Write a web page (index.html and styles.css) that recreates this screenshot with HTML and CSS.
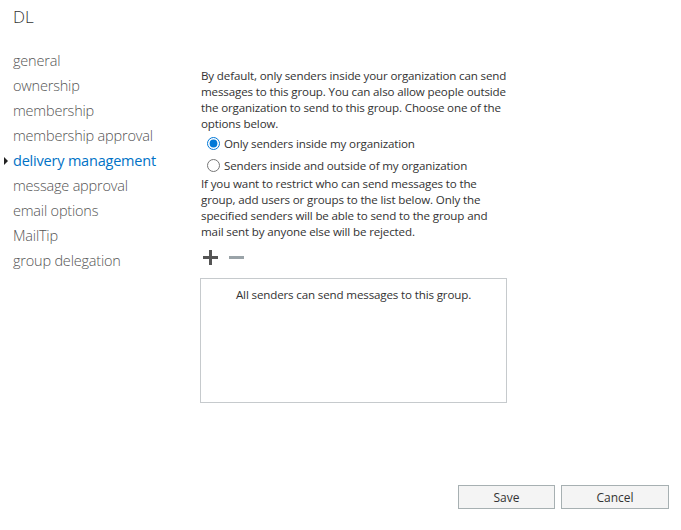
FILE: index.html
```html
<!DOCTYPE html>
<html lang="en">
<head>
  <meta charset="UTF-8" />
  <title>DL - delivery management</title>
  <link rel="stylesheet" href="styles.css">
</head>
<body>
  <div class="page">
    <h1 class="title">DL</h1>

    <div class="main">
      <ul class="nav">
        <li>general</li>
        <li>ownership</li>
        <li>membership</li>
        <li>membership approval</li>
        <li class="active">delivery management</li>
        <li>message approval</li>
        <li>email options</li>
        <li>MailTip</li>
        <li>group delegation</li>
      </ul>

      <div class="content">
        <p class="text">By default, only senders inside your organization can send messages to this group. You can also allow people outside the organization to send to this group. Choose one of the options below.</p>

        <label class="radio">
          <input type="radio" name="senders" checked>
          <span>Only senders inside my organization</span>
        </label>
        <label class="radio">
          <input type="radio" name="senders">
          <span>Senders inside and outside of my organization</span>
        </label>

        <p class="text">If you want to restrict who can send messages to the group, add users or groups to the list below. Only the specified senders will be able to send to the group and mail sent by anyone else will be rejected.</p>

        <div class="toolbar">
          <svg class="icon" width="15" height="15" viewBox="0 0 15 15">
            <rect x="6" y="0" width="3" height="15" fill="#555"/>
            <rect x="0" y="6" width="15" height="3" fill="#555"/>
          </svg>
          <svg class="icon" width="15" height="15" viewBox="0 0 15 15">
            <rect x="0" y="6" width="15" height="3" fill="#9aa3a8"/>
          </svg>
        </div>

        <div class="list">All senders can send messages to this group.</div>
      </div>
    </div>

    <div class="buttons">
      <button class="btn save">Save</button>
      <button class="btn cancel">Cancel</button>
    </div>
  </div>
</body>
</html>
```

FILE: styles.css
```css
* {
  box-sizing: border-box;
}

body {
  margin: 0;
  font-family: 'Open Sans', 'Noto Sans', sans-serif;
  color: #333;
  background: #fff;
}

.page {
  width: 681px;
  height: 530px;
  position: relative;
}

.title {
  margin: 0;
  padding: 6px 0 0 13px;
  font-size: 17px;
  font-weight: 300;
  line-height: 22px;
  color: #333;
}

.main {
  display: flex;
  margin-top: 20px;
}

.nav {
  list-style: none;
  margin: 0;
  padding: 0 0 0 13px;
  width: 200px;
}

.nav li {
  position: relative;
  font-size: 14.5px;
  font-weight: 300;
  line-height: 25px;
  color: #555;
  letter-spacing: -0.2px;
  white-space: nowrap;
}

.nav li.active {
  color: #0072c6;
  font-weight: 400;
}

.nav li.active::before {
  content: '';
  position: absolute;
  left: -9px;
  top: 9px;
  border-left: 4px solid #222;
  border-top: 4px solid transparent;
  border-bottom: 4px solid transparent;
}

.content {
  width: 307px;
  padding-top: 20px;
  font-size: 11.6px;
  letter-spacing: -0.15px;
}

.text {
  margin: 0;
  padding-left: 1px;
  line-height: 16px;
}

.radio {
  display: flex;
  align-items: center;
  height: 22px;
  padding-left: 7px;
}

.radio input {
  margin: 0 4px 0 0;
  width: 13px;
  height: 13px;
  accent-color: #0078d7;
}

.toolbar {
  display: flex;
  gap: 11px;
  padding: 10px 0 0 3px;
  height: 38px;
}

.list {
  width: 307px;
  height: 125px;
  border: 1px solid #c6cacd;
  text-align: center;
  padding-top: 8px;
}

.buttons {
  position: absolute;
  right: 12px;
  bottom: 21px;
  display: flex;
  gap: 6px;
}

.btn {
  height: 24px;
  font-family: inherit;
  font-size: 12px;
  color: #333;
  background: #f4f4f4;
  border: 1px solid #a7b0b2;
  border-radius: 0;
}

.save {
  width: 97px;
}

.cancel {
  width: 108px;
}
```
